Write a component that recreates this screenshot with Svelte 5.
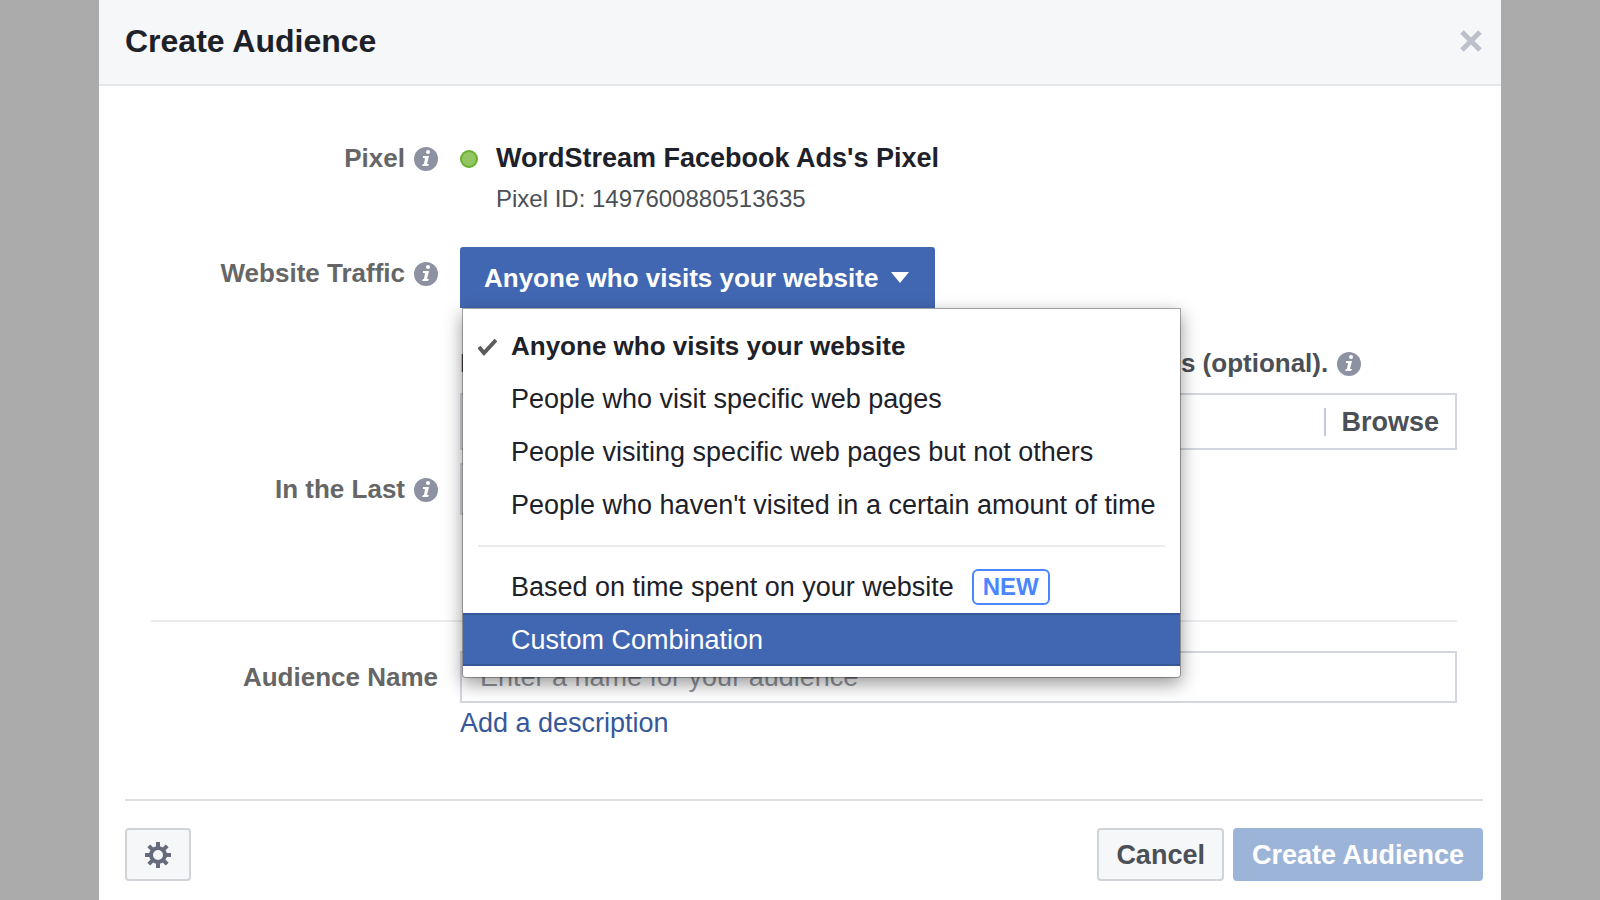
<script>
    const options = [
        { id: 'anyone', label: 'Anyone who visits your website' },
        { id: 'specific', label: 'People who visit specific web pages' },
        { id: 'exclude', label: 'People visiting specific web pages but not others' },
        { id: 'inactive', label: "People who haven't visited in a certain amount of time" }
    ]
    const extraOptions = [
        { id: 'time', label: 'Based on time spent on your website', isNew: true },
        { id: 'custom', label: 'Custom Combination' }
    ]

    let selected = $state('anyone')
    let highlighted = $state('custom')
    let open = $state(true)
    let domains = $state('')
    let days = $state(30)
    let name = $state('')

    const selectedLabel = $derived([...options, ...extraOptions].find(o => o.id === selected).label)

    function choose(id) {
        selected = id
        open = false
    }
</script>

{#snippet info(about)}
    <svg class="info" viewBox="0 0 24 24" role="img" aria-label={about}>
        <circle cx="12" cy="12" r="12" fill="#8d92a3" />
        <circle cx="14" cy="5" r="2" fill="#fff" />
        <path d="M9 9h6l-2 8h2l-1 2H8l1-2h1l1-6H9z" fill="#fff" />
    </svg>
{/snippet}

{#snippet option(o)}
    <button
        class="option"
        class:selected={o.id === selected}
        class:highlighted={o.id === highlighted}
        role="menuitemradio"
        aria-checked={o.id === selected}
        onmouseenter={() => highlighted = o.id}
        onclick={() => choose(o.id)}
    >
        <span class="mark">
            {#if o.id === selected}
                <svg viewBox="0 -2 19 20" width="19" height="20"><path d="M1 9l5 6L18 2" fill="none" stroke="#5c5c5c" stroke-width="4" /></svg>
            {/if}
        </span>
        {o.label}
        {#if o.isNew}<span class="new">NEW</span>{/if}
    </button>
{/snippet}

<main class="dialog">
    <header>
        <h1>Create Audience</h1>
        <button class="close" aria-label="Close">
            <svg viewBox="0 0 22 22" width="22" height="22"><path d="M2 2l18 18M20 2L2 20" stroke="#bcc0ca" stroke-width="5" /></svg>
        </button>
    </header>

    <form onsubmit={e => e.preventDefault()}>
        <div class="row pixel">
            <div class="label">Pixel {@render info('About the pixel')}</div>
            <div class="pixel-info">
                <span class="status"></span>
                <div>
                    <strong>WordStream Facebook Ads's Pixel</strong>
                    <p>Pixel ID: 1497600880513635</p>
                </div>
            </div>
        </div>

        <div class="row traffic">
            <div class="label">Website Traffic {@render info('About website traffic')}</div>
            <div>
                <div class="dropdown">
                    <button class="toggle" aria-haspopup="menu" aria-expanded={open} onclick={() => open = !open}>
                        {selectedLabel}
                        <svg viewBox="0 0 18 11" width="18" height="11"><path d="M0 0h18l-9 11z" fill="#fff" /></svg>
                    </button>
                    {#if open}
                        <div class="menu" role="menu">
                            {#each options as o}
                                {@render option(o)}
                            {/each}
                            <hr>
                            {#each extraOptions as o}
                                {@render option(o)}
                            {/each}
                        </div>
                    {/if}
                </div>
                <div class="domain-label">
                    <label for="domains">Include only your traffic from one or more specific domains (optional).</label>
                    {@render info('About domains')}
                </div>
                <div class="browse-field">
                    <input id="domains" type="text" bind:value={domains}>
                    <button class="browse">Browse</button>
                </div>
            </div>
        </div>

        <div class="row last">
            <label class="label" for="days">In the Last {@render info('About the time window')}</label>
            <div class="days">
                <input id="days" type="text" bind:value={days}>
                <span>days</span>
            </div>
        </div>

        <hr class="divider">

        <div class="row">
            <label class="label" for="name">Audience Name</label>
            <div>
                <input id="name" type="text" placeholder="Enter a name for your audience" bind:value={name}>
                <a href="#description">Add a description</a>
            </div>
        </div>
    </form>

    <footer>
        <button class="btn settings" aria-label="Settings">
            <svg viewBox="-14 -14 28 28" width="28" height="28">
                <circle r="7" fill="none" stroke="#656b7c" stroke-width="4" />
                {#each [0, 45, 90, 135] as angle}
                    <path d="M0 -13v5M0 8v5" stroke="#656b7c" stroke-width="4" transform="rotate({angle})" />
                {/each}
            </svg>
        </button>
        <div class="actions">
            <button class="btn">Cancel</button>
            <button class="btn primary">Create Audience</button>
        </div>
    </footer>
</main>

<style>
    :global(body) {
        background: #ababab;
    }
    .dialog, .dialog * {
        box-sizing: border-box;
    }
    .dialog {
        display: flex;
        flex-direction: column;
        min-height: 100vh;
        margin: 0 99px;
        background: #fff;
        color: #1d2129;
        font: 27px/32px "Liberation Sans", Arial, sans-serif;
    }
    button, input {
        font: inherit;
        color: inherit;
    }
    button {
        padding: 0;
        border: 0;
        background: none;
        cursor: pointer;
    }
    svg {
        display: block;
        flex: none;
    }
    header {
        display: flex;
        align-items: center;
        justify-content: space-between;
        height: 86px;
        padding: 0 19px 2px 26px;
        background: #f6f7f9;
        border-bottom: 2px solid #e5e7ea;
    }
    h1 {
        margin: 0;
        font-size: 32px;
        line-height: 36px;
    }
    form {
        flex: 1;
        padding: 56px 44px 0 52px;
    }
    .row {
        display: grid;
        grid-template-columns: 287px minmax(0, 1fr);
        column-gap: 22px;
    }
    .label {
        display: flex;
        align-items: center;
        justify-content: flex-end;
        gap: 9px;
        height: 52px;
        color: #666;
        font-size: 26px;
        font-weight: bold;
    }
    .info {
        width: 24px;
        height: 24px;
        margin-top: 2px;
    }
    .pixel {
        margin-bottom: 32px;
    }
    .pixel .label {
        height: 32px;
    }
    .pixel-info {
        display: flex;
        gap: 18px;
    }
    .status {
        width: 18px;
        height: 18px;
        margin-top: 8px;
        border: 2px solid #69b02e;
        border-radius: 50%;
        background: #92c661;
    }
    .pixel-info p {
        margin: 9px 0 0;
        color: #4b4f56;
        font-size: 24px;
    }
    .dropdown {
        position: relative;
        width: max-content;
    }
    .toggle {
        display: flex;
        align-items: center;
        gap: 13px;
        height: 61px;
        padding: 0 26px 0 24px;
        border-radius: 3px 3px 0 0;
        background: #4267b2;
        color: #fff;
        font-size: 26px;
        font-weight: bold;
    }
    .menu {
        position: absolute;
        top: 100%;
        left: 2px;
        z-index: 1;
        width: 719px;
        padding: 10px 0 11px;
        background: #fff;
        background-clip: padding-box;
        border: 1px solid rgba(0, 0, 0, .3);
        border-radius: 0 0 4px 4px;
        box-shadow: 0 6px 18px rgba(0, 0, 0, .4);
    }
    .menu hr {
        margin: 14px 15px 13px;
        border: 0;
        border-top: 2px solid #e9ebee;
    }
    .option {
        display: flex;
        align-items: center;
        width: 100%;
        height: 53px;
        padding-left: 15px;
        white-space: nowrap;
    }
    .option.selected {
        font-size: 26px;
        font-weight: bold;
    }
    .option.highlighted {
        background: #4267b2;
        box-shadow: inset 0 2px #365899, inset 0 -2px #365899;
        color: #fff;
    }
    .mark {
        width: 33px;
    }
    .new {
        margin-left: 18px;
        padding: 0 9px;
        border: 2px solid #4a86ff;
        border-radius: 6px;
        color: #4a86ff;
        font-size: 24px;
        font-weight: bold;
    }
    .domain-label {
        display: flex;
        align-items: center;
        gap: 9px;
        margin-top: 39px;
        color: #4b4f56;
        font-size: 26px;
        font-weight: bold;
        white-space: nowrap;
    }
    input {
        width: 100%;
        height: 52px;
        padding: 0 18px;
        border: 2px solid #d3d6de;
        background: #fff;
        outline: 0;
    }
    input::placeholder {
        color: #90949c;
        opacity: 1;
    }
    .browse-field {
        display: flex;
        align-items: center;
        height: 57px;
        margin-top: 14px;
        border: 2px solid #d3d6de;
    }
    .browse-field input {
        flex: 1;
        border: 0;
    }
    .browse {
        height: 28px;
        padding: 0 16px 0 15px;
        border-left: 2px solid #bfcbe0;
        color: #4b4f56;
        font-weight: bold;
        line-height: 26px;
    }
    .last {
        margin-top: 13px;
    }
    .days {
        display: flex;
        align-items: center;
        gap: 12px;
    }
    .days input {
        width: 100px;
    }
    .divider {
        margin: 105px 0 29px;
        border: 0;
        border-top: 2px solid #e9ebee;
    }
    a {
        display: block;
        width: max-content;
        margin-top: 4px;
        color: #365899;
        text-decoration: none;
    }
    #name {
        display: block;
    }
    footer {
        display: flex;
        justify-content: space-between;
        margin: 0 18px 0 26px;
        padding: 27px 0 19px;
        border-top: 2px solid #dddfe2;
    }
    .actions {
        display: flex;
        gap: 9px;
    }
    .btn {
        height: 53px;
        padding: 0 17px;
        border: 2px solid #d0d3d8;
        border-radius: 4px;
        background: #f6f7f9;
        color: #4b4f56;
        font-weight: bold;
    }
    .btn.primary {
        border-color: #9cb4d8;
        background: #9cb4d8;
        color: #fff;
    }
</style>
